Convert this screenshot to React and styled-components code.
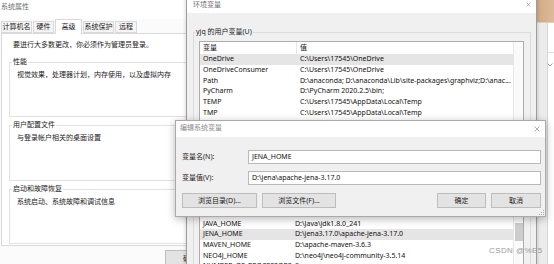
import React from "react";
import styled, { createGlobalStyle } from "styled-components";

const Global = createGlobalStyle`
  html, body { margin: 0; padding: 0; background: #fff; overflow: hidden; }
  * { box-sizing: border-box; }
`;

const Desktop = styled.div`
  position: relative;
  width: 554px;
  height: 264px;
  overflow: hidden;
  background: #fff;
  font-family: "Noto Sans", "Noto Sans CJK SC", sans-serif;
  font-size: 7px;
  line-height: 10px;
  color: #1b1b1b;
`;

/* ---------- back window on the right ---------- */
const BackWindow = styled.div`
  position: absolute;
  left: 537px;
  top: 0;
  width: 24px;
  height: 264px;
  display: flex;
  flex-direction: column;
  background: #fff;
`;
const BackHeader = styled.div`
  height: 23px;
  background: linear-gradient(90deg, #d2aa86, #e0c1a2);
  border-bottom: 1px solid #d8cfc6;
`;
const BackBody = styled.div`
  flex: 1;
  display: flex;
`;
const BackStrip = styled.div`
  width: 11px;
  background: #ececec;
  border-right: 1px solid #d6d6d6;
`;
const BackPane = styled.div`
  flex: 1;
  display: flex;
  flex-direction: column;
  align-items: flex-start;
`;
const BackLine = styled.div`
  align-self: stretch;
  margin-top: 29px;
  height: 1px;
  background: #dedede;
`;
const Chevron = styled.svg`
  margin-top: 10px;
  margin-left: -1px;
`;

/* ---------- system properties ---------- */
const SysWindow = styled.div`
  position: absolute;
  left: 0;
  top: 0;
  width: 192px;
  height: 280px;
  overflow: hidden;
  display: flex;
  flex-direction: column;
  background: #fbfbfb;
`;
const SysTitle = styled.div`
  height: 19px;
  padding: 2px 0 0 1px;
  color: #707070;
  background: #fff;
`;
const TabStrip = styled.div`
  height: 14px;
  display: flex;
  align-items: flex-end;
  gap: 1px;
  padding-left: 1px;
  position: relative;
  z-index: 1;
`;
const Tab = styled.div`
  width: ${(p) => p.$w}px;
  height: ${(p) => (p.$active ? 15 : 12)}px;
  margin-bottom: ${(p) => (p.$active ? -1 : 0)}px;
  display: flex;
  align-items: center;
  justify-content: center;
  border: 1px solid #d9d9d9;
  border-bottom: ${(p) => (p.$active ? "none" : "1px solid #d9d9d9")};
  background: ${(p) => (p.$active ? "#fff" : "#f5f5f5")};
  color: #222;
`;
const TabPanel = styled.div`
  height: 213px;
  width: 328px;
  flex: none;
  margin-left: 1px;
  border: 1px solid #d9d9d9;
  background: #fff;
  display: flex;
  flex-direction: column;
  padding: 6px 8px 0 7px;
`;
const Intro = styled.div`
  padding-left: 4px;
  height: 10px;
  margin-bottom: 7px;
`;
const Groups = styled.div`
  display: flex;
  flex-direction: column;
  gap: 3px;
`;
const Group = styled.fieldset`
  margin: 0;
  min-width: 0;
  height: ${(p) => p.$h}px;
  padding: ${(p) => p.$pad};
  border: 1px solid ${(p) => p.$line || "#e2e2e2"};
`;
const Legend = styled.legend`
  padding: 0 1px;
  margin-left: ${(p) => p.$ml}px;
  line-height: 10px;
  color: #1b1b1b;
`;
const GroupText = styled.div`
  height: 10px;
`;
const SysFooter = styled.div`
  display: flex;
  gap: 6px;
  padding: 4px 0 0 165px;
`;
const Button = styled.div`
  width: ${(p) => p.$w}px;
  height: ${(p) => p.$h}px;
  flex: none;
  display: flex;
  align-items: center;
  justify-content: center;
  background: #e3e3e3;
  border: 1px solid #bdbdbd;
  color: #1b1b1b;
  white-space: nowrap;
`;

/* ---------- environment variables ---------- */
const EnvWindow = styled.div`
  position: absolute;
  left: 186px;
  top: -1px;
  width: 351px;
  height: 300px;
  display: flex;
  flex-direction: column;
  background: #f0f0f0;
  border: 1px solid #9d9d9d;
  box-shadow: 0 0 4px rgba(0, 0, 0, 0.22);
`;
const TitleBar = styled.div`
  height: ${(p) => p.$h}px;
  flex: none;
  display: flex;
  align-items: flex-start;
  padding: ${(p) => p.$pad};
  background: #fff;
  color: ${(p) => p.$color || "#707070"};
`;
const TitleText = styled.div`
  flex: 1;
  line-height: 10px;
`;
const CloseX = styled.svg`
  margin-top: ${(p) => p.$mt}px;
  flex: none;
`;
const EnvBody = styled.div`
  display: flex;
  flex-direction: column;
  gap: 5px;
  padding: 14px 5px 0 6px;
`;
const ListBox = styled.div`
  height: ${(p) => p.$h}px;
  display: flex;
  border: 1px solid #adadad;
  background: #fff;
`;
const ListMain = styled.div`
  flex: 1;
  min-width: 0;
  display: flex;
  flex-direction: column;
`;
const Header = styled.div`
  height: 12px;
  display: flex;
  align-items: center;
  color: #111;
`;
const HeadCell = styled.div`
  width: ${(p) => (p.$w ? `${p.$w}px` : "auto")};
  flex: ${(p) => (p.$w ? "none" : "1")};
  height: 12px;
  line-height: 12px;
  padding-left: 3px;
  border-right: ${(p) => (p.$w ? "1px solid #e5e5e5" : "none")};
`;
const Row = styled.div`
  height: 10.7px;
  display: flex;
  align-items: center;
  background: ${(p) => (p.$sel ? "#e5e5e5" : "transparent")};
  color: #111;
`;
const Cell = styled.div`
  width: ${(p) => (p.$w ? `${p.$w}px` : "auto")};
  flex: ${(p) => (p.$w ? "none" : "1")};
  min-width: 0;
  padding-left: 3px;
  white-space: nowrap;
  overflow: hidden;
`;
const ScrollTrack = styled.div`
  width: 10px;
  flex: none;
  display: flex;
  flex-direction: column;
  align-items: center;
  background: #fafafa;
  border-left: 1px solid #e6e6e6;
`;
const Thumb = styled.div`
  width: 8px;
  height: ${(p) => p.$h}px;
  margin-top: ${(p) => p.$top}px;
  background: #cdcdcd;
`;
const ListButtons = styled.div`
  display: flex;
  justify-content: flex-end;
  gap: 6px;
  margin-top: 6px;
`;

/* ---------- edit dialog ---------- */
const Dialog = styled.div`
  position: absolute;
  left: 175px;
  top: 120px;
  width: 371px;
  height: 97px;
  display: flex;
  flex-direction: column;
  background: #f0f0f0;
  border: 1px solid #a9a9a9;
  box-shadow: 0 2px 8px rgba(0, 0, 0, 0.28);
`;
const DialogBody = styled.div`
  flex: 1;
  display: flex;
  flex-direction: column;
  gap: 7px;
  padding: 13px 4px 0 6px;
`;
const FieldRow = styled.div`
  height: 14px;
  display: flex;
  align-items: center;
`;
const FieldLabel = styled.div`
  width: 66px;
  flex: none;
`;
const TextInput = styled.div`
  flex: 1;
  height: 14px;
  display: flex;
  align-items: center;
  padding-left: 3px;
  background: #fff;
  border: 1px solid #b9b9b9;
  color: #111;
`;
const DialogButtons = styled.div`
  display: flex;
  gap: 5px;
  margin-top: 1px;
`;
const Spacer = styled.div`
  flex: 1;
`;
const Grip = styled.svg`
  position: absolute;
  right: 1px;
  bottom: 1px;
`;

const Watermark = styled.div`
  position: absolute;
  left: 489px;
  top: 246px;
  font-family: "Liberation Sans", "Noto Sans", sans-serif;
  font-size: 8px;
  line-height: 10px;
  letter-spacing: 0.4px;
  color: #9a9a9a;
`;

const X = ({ size, mt }) => (
  <CloseX $mt={mt} width={size} height={size} viewBox="0 0 10 10">
    <path d="M1 1 L9 9 M9 1 L1 9" stroke="#7a7a7a" strokeWidth="1" fill="none" />
  </CloseX>
);

const tabs = [
  { t: "计算机名", w: 31 },
  { t: "硬件", w: 21 },
  { t: "高级", w: 27, active: true },
  { t: "系统保护", w: 31 },
  { t: "远程", w: 22 },
];

const userVars = [
  ["OneDrive", "C:\\Users\\17545\\OneDrive", true],
  ["OneDriveConsumer", "C:\\Users\\17545\\OneDrive"],
  ["Path", "D:\\anaconda;  D:\\anaconda\\Lib\\site-packages\\graphviz;D:\\anac..."],
  ["PyCharm", "D:\\PyCharm 2020.2.5\\bin;"],
  ["TEMP", "C:\\Users\\17545\\AppData\\Local\\Temp"],
  ["TMP", "C:\\Users\\17545\\AppData\\Local\\Temp"],
];

const sysVars = [
  ["ComSpec", "C:\\WINDOWS\\system32\\cmd.exe"],
  ["DriverData", "C:\\Windows\\System32\\Drivers\\DriverData"],
  ["JAVA_HOME", "D:\\Java\\jdk1.8.0_241"],
  ["JENA_HOME", "D:\\jena3.17.0\\apache-jena-3.17.0", true],
  ["MAVEN_HOME", "D:\\apache-maven-3.6.3"],
  ["NEO4J_HOME", "D:\\neo4j\\neo4j-community-3.5.14"],
  ["NUMBER_OF_PROCESSORS", "8"],
  ["OS", "Windows_NT"],
];

const VarList = ({ rows, nameW, h, thumb }) => (
  <ListBox $h={h}>
    <ListMain>
      <Header>
        <HeadCell $w={nameW}>变量</HeadCell>
        <HeadCell>值</HeadCell>
      </Header>
      {rows.map(([n, v, sel]) => (
        <Row key={n} $sel={sel}>
          <Cell $w={nameW}>{n}</Cell>
          <Cell>{v}</Cell>
        </Row>
      ))}
    </ListMain>
    <ScrollTrack>{thumb && <Thumb $top={thumb.top} $h={thumb.h} />}</ScrollTrack>
  </ListBox>
);

export default function App() {
  return (
    <Desktop>
      <Global />

      <BackWindow>
        <BackHeader />
        <BackBody>
          <BackStrip />
          <BackPane>
            <BackLine />
            <Chevron width="6" height="4" viewBox="0 0 6 4">
              <path d="M0.5 0.5 L3 3 L5.5 0.5" stroke="#888" strokeWidth="0.8" fill="none" />
            </Chevron>
          </BackPane>
        </BackBody>
      </BackWindow>

      <SysWindow>
        <SysTitle>系统属性</SysTitle>
        <TabStrip>
          {tabs.map((t) => (
            <Tab key={t.t} $w={t.w} $active={t.active}>
              {t.t}
            </Tab>
          ))}
        </TabStrip>
        <TabPanel>
          <Intro>要进行大多数更改，你必须作为管理员登录。</Intro>
          <Groups>
            <Group $h={60} $pad="3px 6px 0 7px">
              <Legend $ml={-5}>性能</Legend>
              <GroupText>视觉效果，处理器计划，内存使用，以及虚拟内存</GroupText>
            </Group>
            <Group $h={61} $pad="3px 6px 0 7px">
              <Legend $ml={-5}>用户配置文件</Legend>
              <GroupText>与登录帐户相关的桌面设置</GroupText>
            </Group>
            <Group $h={60} $pad="3px 6px 0 7px">
              <Legend $ml={-5}>启动和故障恢复</Legend>
              <GroupText>系统启动、系统故障和调试信息</GroupText>
            </Group>
          </Groups>
        </TabPanel>
        <SysFooter>
          <Button $w={50} $h={18}>确定</Button>
        </SysFooter>
      </SysWindow>

      <EnvWindow>
        <TitleBar $h={13} $pad="0 5px 0 6px">
          <TitleText>环境变量</TitleText>
          <X size={5} mt={2} />
        </TitleBar>
        <EnvBody>
          <Group $h={138} $pad="4px 6px 0 5px" $line="#dcdcdc">
            <Legend $ml={-4}>yjq 的用户变量(U)</Legend>
            <VarList rows={userVars} nameW={97} h={90} />
            <ListButtons>
              <Button $w={50} $h={18}>新建(N)...</Button>
              <Button $w={50} $h={18}>编辑(E)...</Button>
              <Button $w={50} $h={18}>删除(D)</Button>
            </ListButtons>
          </Group>
          <Group $h={140} $pad="4px 6px 0 5px" $line="#dcdcdc">
            <Legend $ml={-4}>系统变量(S)</Legend>
            <VarList rows={sysVars} nameW={92} h={120} thumb={{ top: 38, h: 18 }} />
          </Group>
        </EnvBody>
      </EnvWindow>

      <Dialog>
        <TitleBar $h={16} $pad="2px 5px 0 4px" $color="#8a8a8a">
          <TitleText>编辑系统变量</TitleText>
          <X size={6} mt={3} />
        </TitleBar>
        <DialogBody>
          <FieldRow>
            <FieldLabel>变量名(N):</FieldLabel>
            <TextInput>JENA_HOME</TextInput>
          </FieldRow>
          <FieldRow>
            <FieldLabel>变量值(V):</FieldLabel>
            <TextInput>D:\jena\apache-jena-3.17.0</TextInput>
          </FieldRow>
          <DialogButtons>
            <Button $w={75} $h={15}>浏览目录(D)...</Button>
            <Button $w={74} $h={15}>浏览文件(F)...</Button>
            <Spacer />
            <Button $w={49} $h={15}>确定</Button>
            <Button $w={50} $h={15}>取消</Button>
          </DialogButtons>
        </DialogBody>
        <Grip width="5" height="5" viewBox="0 0 5 5">
          <rect x="4" y="0" width="1" height="1" fill="#b0b0b0" />
          <rect x="2" y="2" width="1" height="1" fill="#b0b0b0" />
          <rect x="4" y="2" width="1" height="1" fill="#b0b0b0" />
          <rect x="0" y="4" width="1" height="1" fill="#b0b0b0" />
          <rect x="2" y="4" width="1" height="1" fill="#b0b0b0" />
          <rect x="4" y="4" width="1" height="1" fill="#b0b0b0" />
        </Grip>
      </Dialog>

      <Watermark>CSDN @%E5</Watermark>
    </Desktop>
  );
}
